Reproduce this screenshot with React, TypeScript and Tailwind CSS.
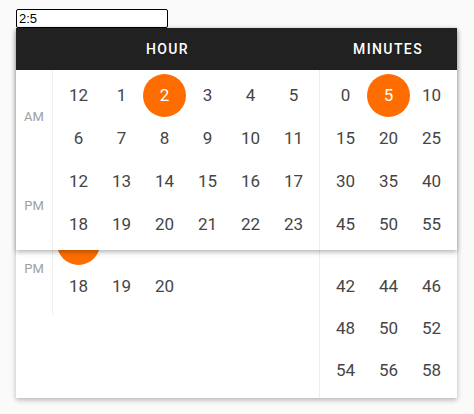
import React from "react";

const HOURS = [
  ["12", "1", "2", "3", "4", "5"],
  ["6", "7", "8", "9", "10", "11"],
  ["12", "13", "14", "15", "16", "17"],
  ["18", "19", "20", "21", "22", "23"],
];
const MINUTES = [
  ["0", "5", "10"],
  ["15", "20", "25"],
  ["30", "35", "40"],
  ["45", "50", "55"],
];
const OLD_MINUTES = [
  ["42", "44", "46"],
  ["48", "50", "52"],
  ["54", "56", "58"],
];

function Cell({ value, selected }: { value: string; selected?: boolean }) {
  return (
    <div className="w-[43px] h-[43px] flex items-center justify-center">
      {selected ? (
        <div className="w-[43px] h-[43px] rounded-full bg-[#ff6d00] text-white flex items-center justify-center">
          {value}
        </div>
      ) : (
        <span className="text-[#454545]">{value}</span>
      )}
    </div>
  );
}

export default function App() {
  return (
    <div
      className="min-h-screen bg-[#fafafa] pl-4 pt-[9px] pr-[17px]"
      style={{ fontFamily: "Roboto, 'Noto Sans', sans-serif" }}
    >
      <input
        readOnly
        value="2:5"
        className="block w-[152px] h-[19px] border border-black rounded-[2px] bg-white px-[2px] text-[13px] leading-none text-black outline-none"
        style={{ fontFamily: "'Liberation Sans', Arial, sans-serif" }}
      />

      <div className="relative w-[441px]">
        {/* stale picker underneath */}
        <div className="h-[370px] bg-white shadow-[0_2px_5px_rgba(0,0,0,0.28)] flex text-[17px]">
          <div className="w-[37px] h-[287px] border-r border-[#eeeeee] pt-[233px] text-center text-[13px] leading-4 text-[#9e9e9e]">
            PM
          </div>
          <div className="w-[266px] px-1 pt-[194px]">
            <div className="flex">
              <Cell value="12" selected />
            </div>
            <div className="flex">
              <Cell value="18" />
              <Cell value="19" />
              <Cell value="20" />
            </div>
          </div>
          <div className="flex-1 border-l border-[#eeeeee] px-1 pt-[238px]">
            {OLD_MINUTES.map((row, i) => (
              <div key={i} className="flex h-[42px]">
                {row.map((m) => (
                  <div key={m} className="w-[43px] flex items-center justify-center text-[#454545]">
                    {m}
                  </div>
                ))}
              </div>
            ))}
          </div>
        </div>

        {/* current picker */}
        <div className="absolute top-0 left-0 w-[441px] bg-white shadow-[0_2px_5px_rgba(0,0,0,0.3)] text-[17px]">
          <div className="flex h-[42px] bg-[#212121] text-white text-[14px] font-medium tracking-[0.1em]">
            <div className="w-[303px] flex items-center justify-center">HOUR</div>
            <div className="flex-1 flex items-center justify-center">MINUTES</div>
          </div>
          <div className="flex">
            <div className="w-[37px] border-r border-[#eeeeee] flex flex-col py-1 text-[13px] text-[#9e9e9e]">
              <div className="h-[86px] flex items-center justify-center">AM</div>
              <div className="h-[86px] flex items-center justify-center pt-[5px]">PM</div>
            </div>
            <div className="w-[266px] px-1 py-1">
              {HOURS.map((row, i) => (
                <div key={i} className="flex">
                  {row.map((h, j) => (
                    <Cell key={j} value={h} selected={i === 0 && h === "2"} />
                  ))}
                </div>
              ))}
            </div>
            <div className="flex-1 border-l border-[#eeeeee] px-1 py-1">
              {MINUTES.map((row, i) => (
                <div key={i} className="flex">
                  {row.map((m) => (
                    <Cell key={m} value={m} selected={m === "5"} />
                  ))}
                </div>
              ))}
            </div>
          </div>
        </div>
      </div>
    </div>
  );
}
